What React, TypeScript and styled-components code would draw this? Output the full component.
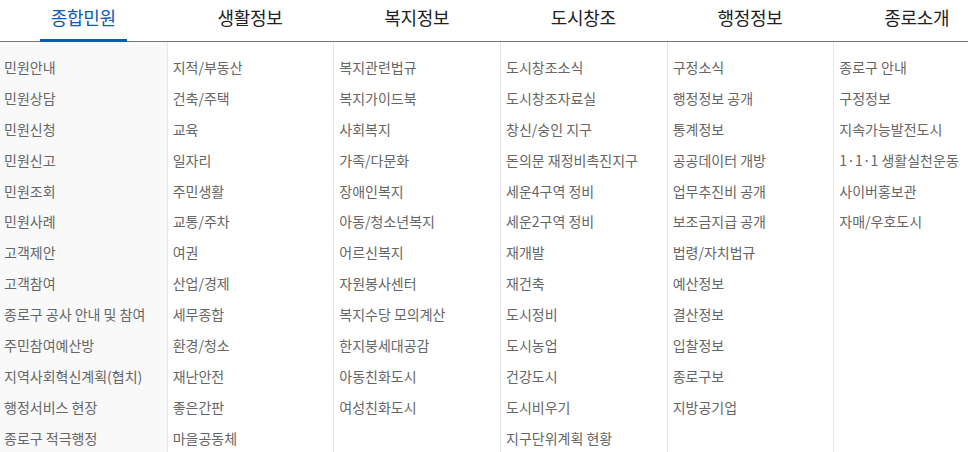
import React from "react";
import styled, { createGlobalStyle } from "styled-components";

const GlobalStyle = createGlobalStyle`
  html, body {
    margin: 0;
    padding: 0;
    overflow: hidden;
    background: #fff;
  }
  body {
    font-family: "Noto Sans CJK KR", "Noto Sans", sans-serif;
  }
  ul {
    list-style: none;
    margin: 0;
    padding: 0;
  }
`;

type MenuGroup = {
  title: string;
  items: string[];
};

const menuGroups: MenuGroup[] = [
  {
    title: "종합민원",
    items: [
      "민원안내",
      "민원상담",
      "민원신청",
      "민원신고",
      "민원조회",
      "민원사례",
      "고객제안",
      "고객참여",
      "종로구 공사 안내 및 참여",
      "주민참여예산방",
      "지역사회혁신계획(협치)",
      "행정서비스 현장",
      "종로구 적극행정",
    ],
  },
  {
    title: "생활정보",
    items: [
      "지적/부동산",
      "건축/주택",
      "교육",
      "일자리",
      "주민생활",
      "교통/주차",
      "여권",
      "산업/경제",
      "세무종합",
      "환경/청소",
      "재난안전",
      "좋은간판",
      "마을공동체",
    ],
  },
  {
    title: "복지정보",
    items: [
      "복지관련법규",
      "복지가이드북",
      "사회복지",
      "가족/다문화",
      "장애인복지",
      "아동/청소년복지",
      "어르신복지",
      "자원봉사센터",
      "복지수당 모의계산",
      "한지붕세대공감",
      "아동친화도시",
      "여성친화도시",
    ],
  },
  {
    title: "도시창조",
    items: [
      "도시창조소식",
      "도시창조자료실",
      "창신/숭인 지구",
      "돈의문 재정비촉진지구",
      "세운4구역 정비",
      "세운2구역 정비",
      "재개발",
      "재건축",
      "도시정비",
      "도시농업",
      "건강도시",
      "도시비우기",
      "지구단위계획 현황",
    ],
  },
  {
    title: "행정정보",
    items: [
      "구정소식",
      "행정정보 공개",
      "통계정보",
      "공공데이터 개방",
      "업무추진비 공개",
      "보조금지급 공개",
      "법령/자치법규",
      "예산정보",
      "결산정보",
      "입찰정보",
      "종로구보",
      "지방공기업",
    ],
  },
  {
    title: "종로소개",
    items: [
      "종로구 안내",
      "구정정보",
      "지속가능발전도시",
      "1·1·1 생활실천운동",
      "사이버홍보관",
      "자매/우호도시",
    ],
  },
];

const Wrapper = styled.div`
  width: 1000px;
  height: 452px;
  display: flex;
  flex-direction: column;
`;

const TabBar = styled.ul`
  display: grid;
  grid-template-columns: repeat(6, 1fr);
  height: 41px;
  border-bottom: 1px solid #777;
`;

const Tab = styled.li`
  display: flex;
  justify-content: center;
  align-items: flex-end;
`;

const TabLabel = styled.a<{ $active?: boolean }>`
  display: block;
  height: 39px;
  line-height: 34px;
  padding: 0 11px;
  margin-bottom: -1px;
  font-size: 18px;
  font-weight: 400;
  letter-spacing: -0.3px;
  color: ${(p) => (p.$active ? "#0b5cb4" : "#222")};
  border-bottom: 3px solid ${(p) => (p.$active ? "#0b5cb4" : "transparent")};
  text-decoration: none;
  cursor: pointer;
`;

const Panel = styled.div`
  flex: 1;
  display: grid;
  grid-template-columns: repeat(6, 1fr);
`;

const Column = styled.ul<{ $active?: boolean }>`
  padding: 10px 0 0 5px;
  border-left: 1px solid #e6e6e6;
  background: ${(p) => (p.$active ? "#f9f9f9" : "#fff")};
  &:first-child {
    border-left: none;
    padding-left: 4px;
  }
`;

const Item = styled.li`
  height: 30.9px;
  line-height: 30.9px;
  font-size: 14px;
  color: #666;
  white-space: nowrap;
  cursor: pointer;
`;

export default function App() {
  const activeIndex = 0;

  return (
    <>
      <GlobalStyle />
      <Wrapper>
        <TabBar>
          {menuGroups.map((group, i) => (
            <Tab key={group.title}>
              <TabLabel $active={i === activeIndex}>{group.title}</TabLabel>
            </Tab>
          ))}
        </TabBar>
        <Panel>
          {menuGroups.map((group, i) => (
            <Column key={group.title} $active={i === activeIndex}>
              {group.items.map((item) => (
                <Item key={item}>{item}</Item>
              ))}
            </Column>
          ))}
        </Panel>
      </Wrapper>
    </>
  );
}
